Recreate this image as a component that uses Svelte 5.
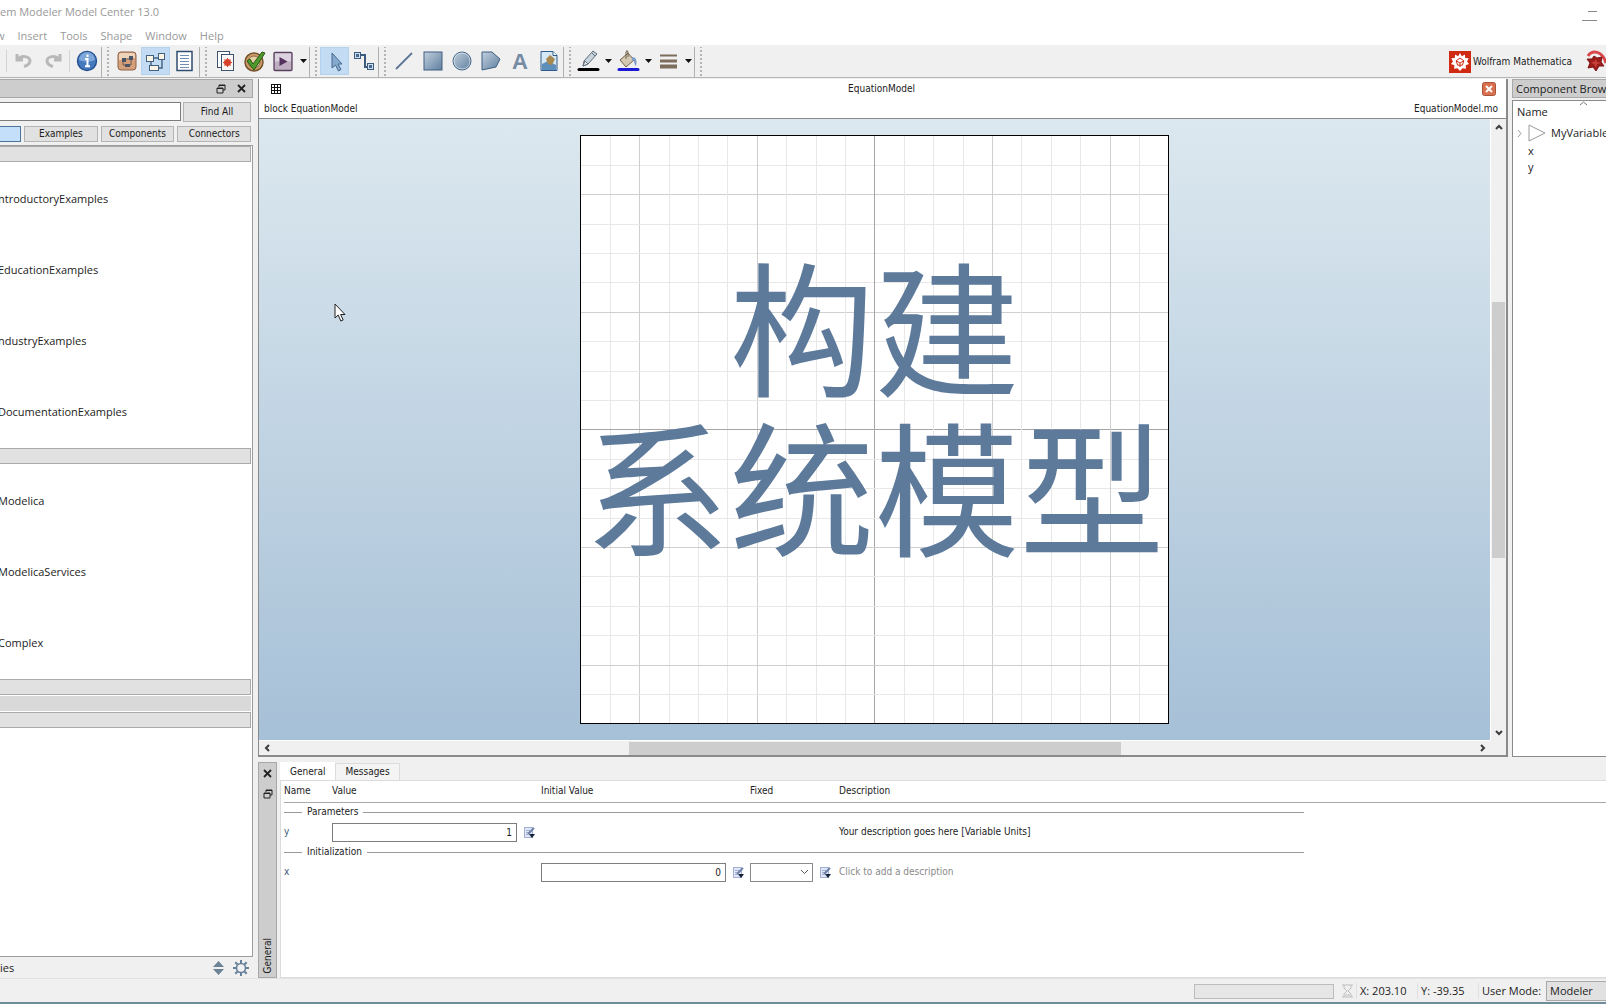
<script lang="ts">
  type Tool = { name: string; label: string; menu?: boolean; active?: boolean };

  const menus = ['w', 'Insert', 'Tools', 'Shape', 'Window', 'Help'];

  const toolGroups: Tool[][] = [
    [
      { name: 'icon', label: 'Icon view' },
      { name: 'diagram', label: 'Diagram view', active: true },
      { name: 'text', label: 'Text view' },
    ],
    [
      { name: 'copy', label: 'Simulation Center' },
      { name: 'validate', label: 'Validate' },
      { name: 'simulate', label: 'Simulate', menu: true },
    ],
    [
      { name: 'select', label: 'Select', active: true },
      { name: 'connect', label: 'Connect' },
    ],
    [
      { name: 'line', label: 'Line' },
      { name: 'rect', label: 'Rectangle' },
      { name: 'ellipse', label: 'Ellipse' },
      { name: 'polygon', label: 'Polygon' },
      { name: 'label', label: 'Text' },
      { name: 'bitmap', label: 'Bitmap' },
    ],
  ];

  const styleTools: Tool[] = [
    { name: 'pen', label: 'Line color', menu: true },
    { name: 'fill', label: 'Fill color', menu: true },
    { name: 'lines', label: 'Line style', menu: true },
  ];

  const filters = ['Examples', 'Components', 'Connectors'];
  const examples = ['ntroductoryExamples', 'EducationExamples', 'ndustryExamples', 'DocumentationExamples'];
  const libraries = ['Modelica', 'ModelicaServices', 'Complex'];

  const gridLines = Array.from({ length: 19 }, (_, i) => i + 1);

  let tab = $state('General');
  let query = $state('');
  let yValue = $state('1');
  let xInitial = $state('0');

  function lineClass(n: number) {
    if (n === 10) return 'axis';
    return n % 4 === 2 ? 'major' : 'minor';
  }
</script>

{#snippet icon(name: string)}
  <svg width="24" height="24" viewBox="0 0 24 24" fill="none" aria-hidden="true">
    {#if name === 'undo'}
      <path d="M5 5v6h6M6 10.500c3-4 11-4 12 1 0 3-2 5-6 6" stroke="#b8b8b8" stroke-width="3" />
    {:else if name === 'redo'}
      <path d="M19 5v6h-6M18 10.500c-3-4-11-4-12 1 0 3 2 5 6 6" stroke="#b8b8b8" stroke-width="3" />
    {:else if name === 'info'}
      <circle cx="12" cy="12" r="9.5" fill="#4479bd" stroke="#244f90" stroke-width="1.4" />
      <path d="M4 11a8 8 0 0 1 16 0c-5 2-11 2-16 0z" fill="#7da7d9" />
      <path d="M12.500 5.500v2.500M10 10h2.500v7M10 17.200h5" stroke="#fff" stroke-width="2" />
    {:else if name === 'icon'}
      <rect x="3" y="3" width="18" height="18" rx="3" fill="#d5a07a" stroke="#8c6248" />
      <path d="M4 11V6q0-2 2-2h12q2 0 2 2v3z" fill="#efd3b8" />
      <path d="M7 9h4v4H7zM14 7h4v4h-4zM10 15h5v3h-5z" fill="#4a5468" />
      <path d="M11 10h3M8 13v3h3M16 11v5h-2" stroke="#6b5a50" />
    {:else if name === 'diagram'}
      <path d="M10 9h4M7 13v6M18 10v9h-3" stroke="#42617f" stroke-width="1.400" />
      <rect x="2.500" y="6.500" width="7" height="6" fill="#fbf4e4" stroke="#42617f" />
      <rect x="14.500" y="4.500" width="6" height="6" fill="#fbf4e4" stroke="#42617f" />
      <rect x="5.500" y="16.500" width="9" height="5" fill="#fbf4e4" stroke="#42617f" />
    {:else if name === 'text'}
      <rect x="4" y="2.500" width="15" height="19" fill="#fff" stroke="#2f4b70" stroke-width="1.500" />
      <path d="M7 6.500h9M7 9.500h9M7 12.500h9M7 15.500h9M7 18.500h9" stroke="#6f8fb5" />
    {:else if name === 'copy'}
      <rect x="4.500" y="2.500" width="12" height="16" fill="#fff" stroke="#3d536e" />
      <rect x="8.500" y="5.500" width="12" height="16" fill="#fbf6f4" stroke="#3d536e" />
      <circle cx="14.500" cy="13.500" r="3.500" fill="#d8402c" />
      <path d="M14.500 9v9M10 13.500h9M11.500 10.500l6 6M17.500 10.500l-6 6" stroke="#d8402c" />
    {:else if name === 'validate'}
      <circle cx="12" cy="13" r="9" fill="#cf9d68" stroke="#73522b" stroke-width="1.500" />
      <circle cx="12" cy="13" r="6" fill="#e6cfa6" stroke="#8c6a45" />
      <path d="M5 12l3-2 3 5L20 3l3 1-11 17z" fill="#4f9a2b" stroke="#245c16" />
    {:else if name === 'simulate'}
      <rect x="3" y="3.500" width="18" height="18" rx="1" fill="#bfaec2" stroke="#5a405f" stroke-width="1.300" />
      <path d="M4 4.500h16v8H4z" fill="#ddd2df" />
      <path d="M8.500 8v9l8-4.500z" fill="#54305c" />
    {:else if name === 'select'}
      <path d="M9 4v15l3.500-3 3 6 2.500-1.500-3-5.500h4z" fill="#87a9cd" stroke="#46698f" />
    {:else if name === 'connect'}
      <path d="M8 6h5v12h4" stroke="#3c5a7c" stroke-width="2" />
      <rect x="2.500" y="3.500" width="6" height="6" fill="#cfe0f1" stroke="#3c5a7c" />
      <rect x="15.500" y="14.500" width="6" height="6" fill="#cfe0f1" stroke="#3c5a7c" />
      <path d="M4 5h3v3H4zM17 16h3v3h-3z" fill="#456a91" />
    {:else if name === 'line'}
      <path d="M4 20L20 4" stroke="#5c7794" stroke-width="1.800" />
    {:else if name === 'rect'}
      <rect x="3" y="3" width="18" height="18" fill="url(#steel)" stroke="#3f5f81" />
    {:else if name === 'ellipse'}
      <circle cx="12" cy="12" r="9" fill="url(#steel)" stroke="#3f5f81" />
      <circle cx="12" cy="12" r="8" stroke="#dbe6f0" stroke-width=".7" />
    {:else if name === 'polygon'}
      <path d="M3 3h10l8 7-4 8-14 3z" fill="url(#steel)" stroke="#3f5f81" />
    {:else if name === 'label'}
      <text x="12" y="20" class="glyph" text-anchor="middle" fill="#758ba4">A</text>
    {:else if name === 'bitmap'}
      <path d="M4 2.500h12l4 4v15H4z" fill="#d6e8f5" stroke="#2f5d8b" />
      <path d="M16 2.500v4h4" fill="#fff" stroke="#2f5d8b" />
      <path d="M5 15l6-3 8 4v5H5z" fill="#5e8fba" />
      <path d="M9 10l4-4 5 4-3 6-4-1z" fill="#a8894f" />
    {:else if name === 'pen'}
      <path d="M7 17l1-5L17 2l4 3-9 10z" fill="#c9d3dc" stroke="#5c6c79" />
      <path d="M7 17l2-5 3 3zM16 4l3 3" fill="#eee" stroke="#5c6c79" />
      <path d="M3 20.500h19" stroke="#000" stroke-width="3" stroke-linecap="round" />
    {:else if name === 'fill'}
      <path d="M4 11l8-7 6 7-8 7z" fill="#d3c9b2" stroke="#6d6048" />
      <path d="M10 10V3q1-3 2 0v5" stroke="#6d6048" />
      <path d="M16 8c5 0 5 5 4 9-2-1-1-6-4-6z" fill="#7c9bc9" />
      <path d="M3 20.500h19" stroke="#1a1ad6" stroke-width="3" stroke-linecap="round" />
    {:else if name === 'lines'}
      <path d="M4 6.500h17" stroke="#7d6d5c" stroke-width="2" />
      <path d="M4 12h17" stroke="#7d6d5c" stroke-width="3" />
      <path d="M4 17.500h17" stroke="#7d6d5c" stroke-width="4" />
    {/if}
  </svg>
{/snippet}

{#snippet tool(t: Tool)}
  <button class="tool" class:active={t.active} aria-label={t.label}>{@render icon(t.name)}</button>
  {#if t.menu}
    <button class="drop" aria-label="{t.label} menu">
      <svg width="7" height="4" viewBox="0 0 7 4"><path d="M0 0h7L3.500 4z" fill="#111" /></svg>
    </button>
  {/if}
{/snippet}

{#snippet floatIcon()}
  <svg width="10" height="10" viewBox="0 0 10 10" fill="none" stroke="#222">
    <path d="M3 3V1h6v5H7M3 1.500h6" />
    <path d="M1 4h6v5H1zM1 4.500h6" />
  </svg>
{/snippet}

{#snippet closeIcon()}
  <svg width="9" height="9" viewBox="0 0 9 9"><path d="M1 1l7 7M8 1L1 8" stroke="#222" stroke-width="1.800" /></svg>
{/snippet}

{#snippet editIcon()}
  <svg width="13" height="13" viewBox="0 0 13 13" fill="none">
    <rect x="1.500" y="1.500" width="8" height="10" fill="#dfe6f7" stroke="#a3b0d2" />
    <path d="M3 4.500h4M3 6.500h3M3 8.500h2" stroke="#a3b0d2" />
    <path d="M5 8l6-6" stroke="#6d80a5" stroke-width="2" />
    <path d="M6 8h6l-3 4z" fill="#16203a" />
  </svg>
{/snippet}

{#snippet chevron(d: string)}
  <svg width="10" height="10" viewBox="0 0 10 10" fill="none"><path {d} stroke="#3c3c3c" stroke-width="2" /></svg>
{/snippet}

<div class="window">
  <svg class="defs" aria-hidden="true">
    <linearGradient id="steel" x1="0" y1="0" x2="1" y2="1">
      <stop offset="0" stop-color="#c2d0de" />
      <stop offset="1" stop-color="#5f7f9f" />
    </linearGradient>
  </svg>

  <header class="titlebar">
    <span>em Modeler Model Center 13.0</span>
    <button class="minimize" aria-label="Minimize">
      <svg width="16" height="12" viewBox="0 0 16 12"><path d="M6 1.500h9M0 10.500h15" stroke="#8a8a8a" /></svg>
    </button>
  </header>

  <nav class="menubar">
    {#each menus as menu}
      <button>{menu}</button>
    {/each}
  </nav>

  <div class="toolbar">
    <div class="history">
      <i class="rule"></i>
      {@render tool({ name: 'undo', label: 'Undo' })}
      {@render tool({ name: 'redo', label: 'Redo' })}
      <i class="rule"></i>
      {@render tool({ name: 'info', label: 'Properties' })}
    </div>
    {#each toolGroups as group}
      <div class="group">
        <i class="grip"></i>
        {#each group as t}{@render tool(t)}{/each}
      </div>
    {/each}
    <div class="group style-tools">
      <i class="grip"></i>
      {#each styleTools as t}{@render tool(t)}{/each}
    </div>
    <i class="grip"></i>

    <div class="brands">
      <button class="brand">
        <svg width="22" height="22" viewBox="0 0 22 22">
          <rect width="22" height="22" fill="#cf2a12" />
          <path d="M11 2l1.800 3.200L16 3.400l.2 3.600 3.600.2-1.800 3.200L20 13l-3.300 1.300.3 3.500-3.500-.6L11 20l-2.400-2.800-3.500.6.3-3.500L2 13l2-2.600L2.200 7.200 5.800 7 6 3.400l3.200 1.800z" fill="#fff" />
          <path d="M11 7l3.800 2.800-1.400 4.400H8.600L7.200 9.800zM7.200 9.800L11 12l3.800-2.200M11 12v4" fill="none" stroke="#cf2a12" />
        </svg>
        Wolfram Mathematica
      </button>
      <button class="brand" aria-label="Simulation Center">
        <svg width="20" height="24" viewBox="0 0 20 24">
          <path d="M2 6C6 0 16 0 20 13" fill="none" stroke="#d8474a" stroke-width="3" />
          <path d="M8 6l3 2 5-1-1 5 3 4-5 0-3 5-3-4-5 1 2-5-3-4 5 0z" fill="#9c1c1a" stroke="#7e1414" />
          <path d="M10 9l1 3 4 1-4 1-1 4-2-4-3-1 4-2z" fill="#c9403a" />
        </svg>
      </button>
    </div>
  </div>

  <main>
    <aside class="library">
      <div class="dock-title">
        <button aria-label="Float">{@render floatIcon()}</button>
        <button aria-label="Close">{@render closeIcon()}</button>
      </div>
      <div class="search">
        <input type="text" aria-label="Find class" bind:value={query} />
        <button class="push">Find All</button>
      </div>
      <div class="filters">
        <button class="push checked" aria-label="All"></button>
        {#each filters as f}
          <button class="push">{f}</button>
        {/each}
      </div>
      <div class="list">
        <div class="section first"></div>
        <ul>
          {#each examples as item}<li>{item}</li>{/each}
        </ul>
        <div class="section"></div>
        <ul>
          {#each libraries as item}<li>{item}</li>{/each}
        </ul>
        <div class="section"></div>
        <div class="section flat"></div>
        <div class="section"></div>
      </div>
      <div class="library-foot">
        <span>ies</span>
        <button aria-label="Expand or collapse">
          <svg width="13" height="14" viewBox="0 0 13 14" fill="#6c8295"><path d="M6.500 0L12 6H1zM6.500 14L12 8H1z" /></svg>
        </button>
        <button aria-label="Settings">
          <svg width="16" height="16" viewBox="0 0 16 16" fill="none" stroke="#66809a">
            <circle cx="8" cy="8" r="4.500" stroke-width="1.600" />
            <path d="M8 0v3M8 13v3M0 8h3M13 8h3M2.300 2.300l2.200 2.200M11.500 11.500l2.200 2.200M13.700 2.300l-2.200 2.200M4.500 11.500l-2.200 2.200" stroke-width="2" />
          </svg>
        </button>
      </div>
    </aside>

    <div class="work">
      <div class="upper">
        <section class="editor">
          <div class="doc-title">
            <svg width="10" height="10" viewBox="0 0 10 10"><path d="M0 .5h10M0 3.500h10M0 6.500h10M0 9.500h10M.5 0v10M3.500 0v10M6.500 0v10M9.500 0v10" stroke="#111" /></svg>
            <span>EquationModel</span>
            <button class="doc-close" aria-label="Close document">
              <svg width="14" height="14" viewBox="0 0 14 14">
                <rect x=".5" y=".5" width="13" height="13" rx="2" fill="#d9714f" stroke="#a8533a" />
                <path d="M4 4l6 6M10 4l-6 6" stroke="#fff" stroke-width="2" />
              </svg>
            </button>
          </div>
          <div class="doc-path">
            <span>block EquationModel</span>
            <span>EquationModel.mo</span>
          </div>
          <div class="viewport">
            <div class="canvas">
              <div class="paper">
                <svg class="grid" viewBox="0 0 20 20" preserveAspectRatio="none" aria-hidden="true">
                  {#each gridLines as n}
                    <line class={lineClass(n)} x1={n} y1="0" x2={n} y2="20" />
                    <line class={lineClass(n)} x1="0" y1={n} x2="20" y2={n} />
                  {/each}
                </svg>
                <h1>构建<br />系统模型</h1>
              </div>
              <svg class="pointer" width="12" height="19" viewBox="0 0 12 19">
                <path d="M1 1v14l3.200-3 2.600 6 2.400-1-2.600-5.500H11z" fill="#fff" stroke="#222" />
              </svg>
            </div>
            <div class="vscroll">
              {@render chevron('M2 7l3-3 3 3')}
              <div class="vtrack"><i></i></div>
              {@render chevron('M2 3l3 3 3-3')}
            </div>
            <div class="hscroll">
              {@render chevron('M7 2L4 5l3 3')}
              <div class="htrack"><i></i></div>
              {@render chevron('M3 2l3 3-3 3')}
            </div>
          </div>
        </section>

        <aside class="browser">
          <div class="dock-title">Component Browser</div>
          <div class="tree">
            <div class="tree-head">
              Name
              <svg width="9" height="5" viewBox="0 0 9 5" fill="none"><path d="M1 4l3.500-3L8 4" stroke="#777" /></svg>
            </div>
            <div class="node root">
              <svg width="6" height="9" viewBox="0 0 6 9" fill="none"><path d="M1 1l3 3.500L1 8" stroke="#999" /></svg>
              <svg width="18" height="18" viewBox="0 0 18 18" fill="#fff"><path d="M1 1v16l16-8z" stroke="#9a9a9a" /></svg>
              <span>MyVariable</span>
            </div>
            <div class="node leaf">x</div>
            <div class="node leaf">y</div>
          </div>
        </aside>
      </div>

      <section class="props">
        <div class="side-title">
          <button aria-label="Close panel">{@render closeIcon()}</button>
          <button aria-label="Float panel">{@render floatIcon()}</button>
          <span>General</span>
        </div>
        <div class="pane">
          <div class="tabs" role="tablist">
            {#each ['General', 'Messages'] as name}
              <button role="tab" aria-selected={tab === name} class:selected={tab === name} onclick={() => (tab = name)}>{name}</button>
            {/each}
          </div>
          <div class="sheet">
            <table>
              <colgroup>
                <col class="c-name" /><col class="c-value" /><col class="c-value" /><col class="c-fixed" /><col />
              </colgroup>
              <thead>
                <tr><th>Name</th><th>Value</th><th>Initial Value</th><th>Fixed</th><th>Description</th></tr>
              </thead>
              <tbody>
                <tr><td colspan="5"><div class="legend">Parameters</div></td></tr>
                <tr>
                  <td class="var">y</td>
                  <td>
                    <div class="field">
                      <input type="text" aria-label="y value" bind:value={yValue} />
                      <button aria-label="Edit y">{@render editIcon()}</button>
                    </div>
                  </td>
                  <td></td>
                  <td></td>
                  <td>Your description goes here [Variable Units]</td>
                </tr>
                <tr><td colspan="5"><div class="legend">Initialization</div></td></tr>
                <tr>
                  <td class="var">x</td>
                  <td></td>
                  <td>
                    <div class="field">
                      <input type="text" aria-label="x initial value" bind:value={xInitial} />
                      <button aria-label="Edit x">{@render editIcon()}</button>
                    </div>
                  </td>
                  <td>
                    <div class="field">
                      <div class="combo">
                        <select aria-label="x fixed"><option></option></select>
                        <svg width="9" height="6" viewBox="0 0 9 6" fill="none"><path d="M1 1l3.500 3.500L8 1" stroke="#555" /></svg>
                      </div>
                      <button aria-label="Edit x fixed">{@render editIcon()}</button>
                    </div>
                  </td>
                  <td class="hint">Click to add a description</td>
                </tr>
              </tbody>
            </table>
          </div>
        </div>
      </section>
    </div>
  </main>

  <footer class="status">
    <div class="progress"></div>
    <svg width="11" height="14" viewBox="0 0 11 14" fill="none" stroke="#bdbdbd"><path d="M0 1h11M0 13h11M2 1v3l3 3-3 3v3M9 1v3L6 7l3 3v3M3 11h5" /></svg>
    <span class="coord">X: 203.10</span>
    <span class="coord">Y: -39.35</span>
    <label for="mode">User Mode:</label>
    <select id="mode"><option>Modeler</option></select>
  </footer>
</div>

<style>
  :global(body) {
    overflow: hidden;
  }
  .window {
    --ui: 'Open Sans', 'Noto Sans', sans-serif;
    --small: 'DejaVu Sans Condensed', 'Liberation Sans', sans-serif;
    height: 100vh;
    box-sizing: border-box;
    display: flex;
    flex-direction: column;
    overflow: hidden;
    border-bottom: 2px solid #6f8c9b;
    background: #f0f0f0;
    color: #1c1c1c;
    font: 11px/16px var(--ui);
  }
  .window * {
    box-sizing: border-box;
  }
  .defs {
    position: absolute;
    width: 0;
    height: 0;
  }
  button {
    margin: 0;
    padding: 0;
    border: none;
    background: none;
    color: inherit;
    font: inherit;
    display: flex;
    align-items: center;
    justify-content: center;
  }
  input,
  select {
    margin: 0;
    color: inherit;
    font: inherit;
    border-radius: 0;
    appearance: none;
  }
  svg {
    flex: none;
  }

  .titlebar {
    flex: none;
    height: 26px;
    display: flex;
    justify-content: space-between;
    align-items: center;
    padding: 0 8px 3px 0;
    background: #fff;
    color: #999;
  }
  .minimize {
    padding-top: 9px;
  }
  .menubar {
    flex: none;
    height: 19px;
    display: flex;
    gap: 13px;
    padding-right: 13px;
    text-indent: 0;
    background: #fff;
    color: #999;
  }
  .menubar button:first-child {
    margin-left: -4px;
  }

  .toolbar {
    flex: none;
    height: 33px;
    display: flex;
    padding-top: 2px;
    border-bottom: 1px solid #b4b4b4;
    font: 10px/16px var(--small);
  }
  .history,
  .group {
    display: flex;
  }
  .history {
    padding-left: 4px;
  }
  .rule {
    width: 1px;
    margin: 3px 2px 5px;
    background: #d4d4d4;
  }
  .grip {
    flex: none;
    width: 11px;
    height: 30px;
    border-left: 1px solid #b0b0b0;
    background: radial-gradient(circle, #b4b4b4 1px, transparent 1px) 4px 2px / 4px 4px repeat-y;
  }
  .tool {
    width: 29px;
    height: 28px;
  }
  .style-tools .tool {
    width: 28px;
  }
  .tool.active {
    background: #c3dcf3;
    border: 1px solid #b2d2ee;
  }
  .drop {
    width: 12px;
    height: 28px;
  }
  .glyph {
    font: bold 22px 'Liberation Sans', sans-serif;
  }
  .brands {
    margin-left: auto;
    display: flex;
    gap: 14px;
  }
  .brand {
    gap: 2px;
    height: 30px;
    white-space: nowrap;
  }

  main {
    flex: 1;
    min-height: 0;
    display: flex;
    gap: 5px;
    padding-top: 1px;
  }

  .library {
    width: 253px;
    flex: none;
    display: flex;
    flex-direction: column;
  }
  .dock-title {
    flex: none;
    height: 19px;
    display: flex;
    align-items: center;
    border: 1px solid #a8a8a8;
    background: #cdcdcd;
  }
  .library .dock-title {
    justify-content: flex-end;
    gap: 11px;
    padding-right: 6px;
    border-left: none;
  }
  .search {
    display: flex;
    gap: 2px;
    padding: 4px 2px 4px 0;
    font: 10px/16px var(--small);
  }
  .search input {
    flex: 1;
    min-width: 0;
    height: 19px;
    border: 1px solid #7d7d7d;
    border-left: none;
    background: #fff;
  }
  .search .push {
    width: 68px;
    height: 20px;
  }
  .push {
    border: 1px solid #b4b4b4;
    background: #e1e1e1;
  }
  .filters {
    display: flex;
    gap: 3px;
    padding: 0 2px 3px 0;
    font: 10px/14px var(--small);
  }
  .filters .push {
    flex: 1;
    height: 16px;
  }
  .filters .checked {
    flex: none;
    width: 21px;
    border: 1px solid #4b739c;
    border-left: none;
    background: #c3dffa;
  }
  .list {
    flex: 1;
    min-height: 0;
    padding-right: 1px;
    border: 1px solid #9c9c9c;
    border-left: none;
    background: #fff;
  }
  .section {
    height: 16px;
    margin-bottom: 1px;
    border: 1px solid #ababab;
    border-left: none;
    background: #e1e1e1;
  }
  .section.flat {
    height: 15px;
    border: none;
    background: #d9d9d9;
  }
  ul {
    list-style: none;
    margin: 0;
    padding: 0 0 1px;
  }
  li {
    height: 71px;
    line-height: 71px;
    margin-left: -2px;
    white-space: nowrap;
  }
  .library-foot {
    flex: none;
    height: 21px;
    display: flex;
    align-items: center;
    gap: 8px;
    padding: 1px 4px 0 0;
  }
  .library-foot span {
    margin-right: auto;
  }

  .work {
    flex: 1;
    min-width: 0;
    display: flex;
    flex-direction: column;
    gap: 5px;
  }
  .upper {
    flex: 1;
    min-height: 0;
    display: flex;
    gap: 4px;
  }
  .editor {
    flex: 1;
    min-width: 0;
    display: flex;
    flex-direction: column;
    background: #fff;
    border: 1px solid #8a8a8a;
    border-width: 0 2px 2px 1px;
    font: 10px/16px var(--small);
  }
  .doc-title,
  .doc-path {
    flex: none;
    height: 20px;
    display: flex;
    align-items: center;
    justify-content: space-between;
  }
  .doc-title {
    padding: 0 10px 0 12px;
  }
  .doc-path {
    height: 19px;
    padding: 1px 8px 0 5px;
  }
  .viewport {
    flex: 1;
    min-height: 0;
    display: grid;
    grid-template: 1fr 15px / 1fr 16px;
    border-top: 1px solid #8a8a8a;
    background: #f0f0f0;
  }
  .canvas {
    position: relative;
    min-height: 0;
    display: flex;
    align-items: center;
    justify-content: center;
    background: linear-gradient(#dce8ef, #a6c0d7);
  }
  .paper {
    position: relative;
    height: 95%;
    aspect-ratio: 1;
    display: flex;
    align-items: center;
    justify-content: center;
    padding-bottom: 54px;
    border: 1px solid #000;
    background: #fff;
  }
  .grid {
    position: absolute;
    inset: 0;
    width: 100%;
    height: 100%;
    shape-rendering: crispEdges;
  }
  .grid line {
    stroke: #e8e8e8;
    stroke-width: 1px;
    vector-effect: non-scaling-stroke;
  }
  .grid .major {
    stroke: #cfcfcf;
  }
  .grid .axis {
    stroke: #a6a6a6;
  }
  h1 {
    position: relative;
    margin: 0;
    color: #5d7a9b;
    font: 400 145px/160px 'Noto Sans CJK SC', sans-serif;
    text-align: center;
    white-space: nowrap;
  }
  .pointer {
    position: absolute;
    left: 75px;
    top: 184px;
  }
  .vscroll {
    display: flex;
    flex-direction: column;
    align-items: center;
    padding: 3px 0 2px;
    border-left: 1px solid #fff;
  }
  .hscroll {
    display: flex;
    align-items: center;
    padding: 0 2px 0 3px;
    border-top: 1px solid #fff;
  }
  .vtrack {
    flex: 1;
    width: 13px;
    padding: 170px 0;
  }
  .htrack {
    flex: 1;
    height: 13px;
    padding: 0 357px;
  }
  .vtrack i,
  .htrack i {
    display: block;
    height: 100%;
    background: #cdcdcd;
  }

  .browser {
    width: 94px;
    flex: none;
    display: flex;
    flex-direction: column;
    gap: 2px;
    overflow: hidden;
    white-space: nowrap;
  }
  .browser .dock-title {
    padding-left: 3px;
    border-right: none;
  }
  .tree {
    flex: 1;
    padding-left: 4px;
    border: 1px solid #8a8a8a;
    border-right: none;
    background: #fff;
  }
  .tree-head {
    display: flex;
    justify-content: space-between;
    height: 22px;
    padding-right: 18px;
    line-height: 22px;
  }
  .node {
    display: flex;
    align-items: center;
    height: 16px;
  }
  .root {
    height: 20px;
    gap: 5px;
  }
  .leaf {
    padding-left: 11px;
  }

  .props {
    flex: none;
    height: 216px;
    display: flex;
    gap: 3px;
    font: 10px/16px var(--small);
  }
  .side-title {
    width: 19px;
    flex: none;
    display: flex;
    flex-direction: column;
    align-items: center;
    gap: 11px;
    padding: 6px 0 4px;
    border: 1px solid #a8a8a8;
    background: #cdcdcd;
  }
  .side-title span {
    margin-top: auto;
    writing-mode: vertical-rl;
    transform: rotate(180deg);
  }
  .pane {
    flex: 1;
    min-width: 0;
    display: flex;
    flex-direction: column;
  }
  .tabs {
    display: flex;
    align-items: flex-end;
    height: 18px;
  }
  .tabs button {
    height: 17px;
    padding: 0 9px;
    border: 1px solid #dcdcdc;
    border-bottom: none;
    background: #f4f4f4;
  }
  .tabs .selected {
    height: 18px;
    border-color: #fff;
    background: #fff;
  }
  .sheet {
    flex: 1;
    border: 1px solid #dcdcdc;
    border-right: none;
    background: #fff;
    padding-left: 3px;
  }
  table {
    width: 100%;
    table-layout: fixed;
    border-collapse: collapse;
  }
  .c-name {
    width: 48px;
  }
  .c-value {
    width: 209px;
  }
  .c-fixed {
    width: 89px;
  }
  th,
  td {
    height: 20px;
    padding: 0;
    text-align: left;
    font-weight: normal;
    white-space: nowrap;
  }
  th {
    height: 21px;
    border-bottom: 1px solid #a8a8a8;
  }
  .var {
    color: #3e5878;
  }
  .hint {
    color: #8a8a8a;
  }
  .legend {
    display: flex;
    align-items: center;
    gap: 5px;
    max-width: 1020px;
  }
  .legend::before,
  .legend::after {
    content: '';
    width: 18px;
    border-top: 1px solid #9a9a9a;
  }
  .legend::after {
    flex: 1;
  }
  .field {
    display: flex;
    align-items: center;
    gap: 6px;
  }
  .field input {
    width: 185px;
    height: 19px;
    padding: 0 4px;
    border: 1px solid #7d7d7d;
    background: #fff;
    text-align: right;
  }
  .combo {
    display: grid;
    align-items: center;
  }
  .combo select,
  .combo svg {
    grid-area: 1 / 1;
  }
  .combo select {
    width: 63px;
    height: 19px;
    border: 1px solid #8a8a8a;
    background: #fff;
  }
  .combo svg {
    justify-self: end;
    margin-right: 4px;
    pointer-events: none;
  }

  .status {
    flex: none;
    height: 24px;
    display: flex;
    align-items: center;
    justify-content: flex-end;
    padding-top: 1px;
    border-top: 1px solid #e2e2e2;
  }
  .progress {
    width: 140px;
    height: 15px;
    margin-right: 8px;
    border: 1px solid #bcbcbc;
    background: #e6e6e6;
  }
  .status svg {
    margin-right: 3px;
  }
  .coord {
    width: 61px;
    padding-left: 3px;
    border-left: 1px solid #e0e0e0;
  }
  .status label {
    width: 68px;
    padding-left: 3px;
    border-left: 1px solid #e0e0e0;
  }
  .status select {
    width: 60px;
    height: 20px;
    padding: 0 3px;
    border: 1px solid #a8a8a8;
    border-right: none;
    background: #e1e1e1;
  }
</style>
